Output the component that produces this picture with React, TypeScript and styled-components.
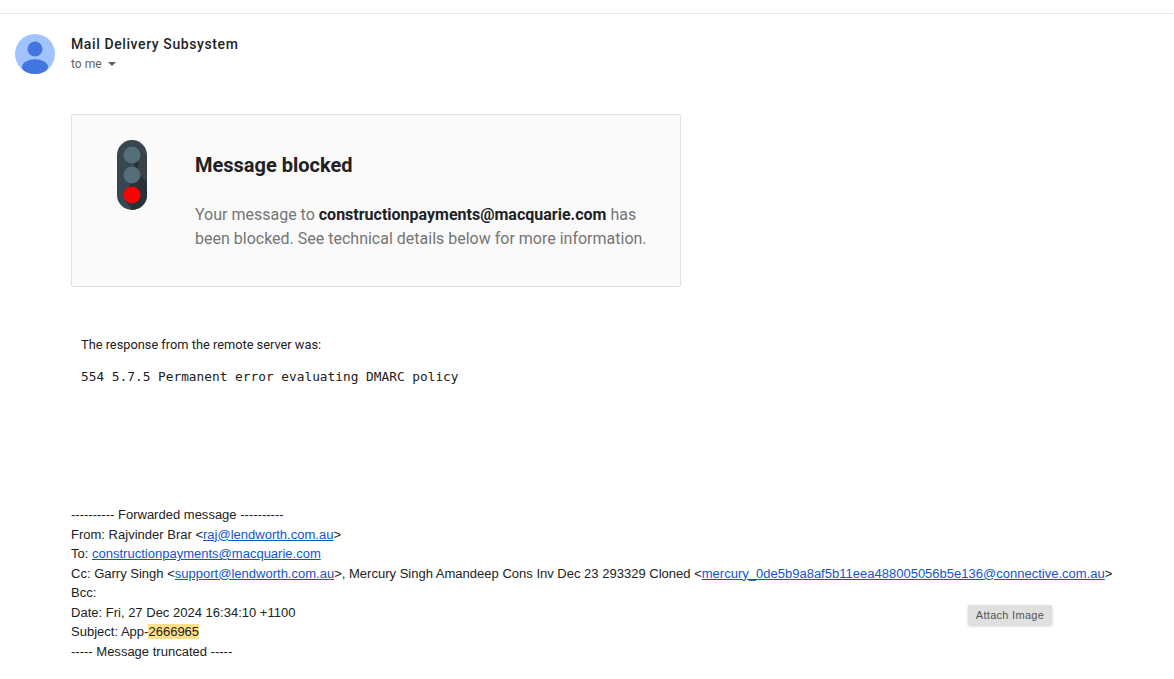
import styled, { createGlobalStyle } from 'styled-components';

const GlobalStyle = createGlobalStyle`
  html, body {
    margin: 0;
    padding: 0;
    background: #ffffff;
  }
  body {
    font-family: 'Liberation Sans', Arial, sans-serif;
    overflow: hidden;
  }
`;

function Avatar() {
  return (
    <svg width="40" height="40" viewBox="0 0 40 40">
      <defs>
        <clipPath id="avatar-clip">
          <circle cx="20" cy="20" r="20" />
        </clipPath>
      </defs>
      <circle cx="20" cy="20" r="20" fill="#a0c3ff" />
      <g clipPath="url(#avatar-clip)" fill="#4375e0">
        <circle cx="20" cy="15" r="7.5" />
        <ellipse cx="20" cy="33" rx="13" ry="7.8" />
      </g>
    </svg>
  );
}

function TrafficLight() {
  return (
    <svg width="30" height="70" viewBox="0 0 30 70">
      <defs>
        <clipPath id="light-clip">
          <rect width="30" height="70" rx="15" />
        </clipPath>
      </defs>
      <rect width="30" height="70" rx="15" fill="#37474f" />
      <g clipPath="url(#light-clip)">
        <path d="M21 9 L30 18 L30 70 L15 70 L9 61 Z" fill="#263238" />
        <path d="M21 9 L30 18 L30 42 L21 33 Z" fill="#3a4248" />
      </g>
      <circle cx="15" cy="15" r="8.5" fill="#546e7a" />
      <circle cx="15" cy="35" r="8.5" fill="#546e7a" />
      <circle cx="15" cy="55" r="8.5" fill="#ff0000" />
    </svg>
  );
}

export default function App() {
  return (
    <>
      <GlobalStyle />
      <Page>
        <TopRule />
        <SenderRow>
          <Avatar />
          <SenderText>
            <SenderName>Mail Delivery Subsystem</SenderName>
            <Recipient>
              to me <Caret />
            </Recipient>
          </SenderText>
        </SenderRow>

        <Body>
          <BlockedCard>
            <LightColumn>
              <TrafficLight />
            </LightColumn>
            <CardText>
              <CardTitle>Message blocked</CardTitle>
              <CardCopy>
                Your message to <strong>constructionpayments@macquarie.com</strong> has been
                blocked. See technical details below for more information.
              </CardCopy>
            </CardText>
          </BlockedCard>

          <ServerResponse>
            <ResponseLabel>The response from the remote server was:</ResponseLabel>
            <ResponseCode>554 5.7.5 Permanent error evaluating DMARC policy</ResponseCode>
          </ServerResponse>

          <Forwarded>
            <Line>---------- Forwarded message ----------</Line>
            <Line>
              From: Rajvinder Brar &lt;<MailLink href="#">raj@lendworth.com.au</MailLink>&gt;
            </Line>
            <Line>
              To: <MailLink href="#">constructionpayments@macquarie.com</MailLink>
            </Line>
            <Line>
              Cc: Garry Singh &lt;<MailLink href="#">support@lendworth.com.au</MailLink>&gt;, Mercury
              Singh Amandeep Cons Inv Dec 23 293329 Cloned &lt;
              <MailLink href="#">mercury_0de5b9a8af5b11eea488005056b5e136@connective.com.au</MailLink>
              &gt;
            </Line>
            <Line>Bcc:</Line>
            <Line>Date: Fri, 27 Dec 2024 16:34:10 +1100</Line>
            <Line>
              Subject: App-<Highlight>2666965</Highlight>
            </Line>
            <Line>----- Message truncated -----</Line>
            <AttachTooltip>Attach Image</AttachTooltip>
          </Forwarded>
        </Body>
      </Page>
    </>
  );
}

const Page = styled.div`
  width: 1174px;
  height: 679px;
  overflow: hidden;
  background: #ffffff;
`;

const TopRule = styled.div`
  height: 13px;
  border-bottom: 1px solid #e8e8e8;
`;

const SenderRow = styled.header`
  display: flex;
  align-items: flex-start;
  gap: 16px;
  padding: 20px 0 0 15px;
  height: 80px;
  box-sizing: border-box;
`;

const SenderText = styled.div`
  display: flex;
  flex-direction: column;
`;

const SenderName = styled.div`
  font-family: Roboto, sans-serif;
  font-size: 14px;
  font-weight: 500;
  letter-spacing: 0.6px;
  line-height: 20px;
  color: #1f1f1f;
`;

const Recipient = styled.div`
  display: flex;
  align-items: center;
  gap: 5px;
  font-family: Roboto, sans-serif;
  font-size: 12px;
  line-height: 20px;
  color: #5e5e5e;
`;

const Caret = styled.span`
  width: 0;
  height: 0;
  margin-left: 1px;
  border-left: 4px solid transparent;
  border-right: 4px solid transparent;
  border-top: 4px solid #5e5e5e;
`;

const Body = styled.main`
  padding: 20px 0 0 71px;
`;

const BlockedCard = styled.section`
  display: flex;
  width: 610px;
  height: 173px;
  box-sizing: border-box;
  background: #fafafa;
  border: 1px solid #e0e0e0;
  border-radius: 2px;
`;

const LightColumn = styled.div`
  width: 123px;
  padding: 25px 0 0 45px;
  box-sizing: border-box;
`;

const CardText = styled.div`
  flex: 1;
  padding-top: 38px;
`;

const CardTitle = styled.h1`
  margin: 0;
  font-family: Roboto, sans-serif;
  font-size: 20px;
  font-weight: 700;
  line-height: 24px;
  color: #202124;
`;

const CardCopy = styled.p`
  margin: 26px 0 0;
  width: 470px;
  font-family: Roboto, sans-serif;
  font-size: 16px;
  line-height: 24px;
  color: #757575;

  strong {
    font-weight: 700;
    color: #202124;
  }
`;

const ServerResponse = styled.section`
  padding: 50px 0 0 10px;
  height: 218px;
  box-sizing: border-box;
`;

const ResponseLabel = styled.div`
  font-family: Roboto, sans-serif;
  font-size: 12.8px;
  line-height: 16px;
  color: #212121;
`;

const ResponseCode = styled.div`
  margin-top: 16px;
  font-family: 'DejaVu Sans Mono', monospace;
  font-size: 12.8px;
  line-height: 16px;
  color: #212121;
`;

const Forwarded = styled.section`
  position: relative;
  font-size: 13.03px;
  color: #222222;
`;

const Line = styled.div`
  height: 19.55px;
  line-height: 19.55px;
  white-space: nowrap;
`;

const MailLink = styled.a`
  color: #1155cc;
  text-decoration: underline;
`;

const Highlight = styled.span`
  background: #ffe08a;
`;

const AttachTooltip = styled.div`
  position: absolute;
  left: 897px;
  top: 100px;
  width: 84px;
  height: 20px;
  border-radius: 2px;
  background: #e0e0e0;
  box-shadow: 0 1px 3px rgba(0, 0, 0, 0.2);
  font-family: 'Liberation Sans', sans-serif;
  font-size: 11px;
  line-height: 20px;
  letter-spacing: 0.3px;
  text-align: center;
  color: #555555;
`;
